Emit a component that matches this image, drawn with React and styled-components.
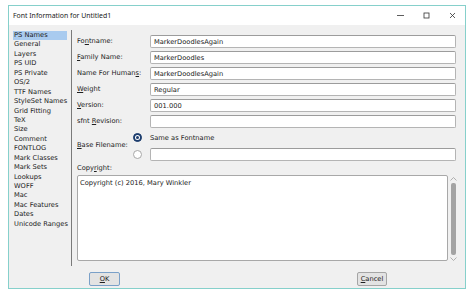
import React from "react";
import styled, { createGlobalStyle } from "styled-components";

const Global = createGlobalStyle`
  html, body { margin: 0; padding: 0; background: #ffffff; }
  body { font-family: "DejaVu Sans", "Liberation Sans", sans-serif; }
  * { box-sizing: border-box; }
`;

const Window = styled.div`
  margin: 5px 0 0 8px;
  width: 458px;
  height: 284px;
  border: 1px solid #86d0cb;
  display: flex;
  flex-direction: column;
  background: #f0f0f0;
`;

const TitleBar = styled.div`
  height: 19px;
  flex: none;
  background: #ffffff;
  display: flex;
  align-items: center;
  padding-left: 4px;
  font-family: "Noto Sans", "Open Sans", sans-serif;
  font-size: 6.9px;
  color: #1a1a1a;
`;

const Title = styled.div`
  flex: 1;
`;

const Controls = styled.div`
  display: flex;
  align-items: center;
  height: 100%;
`;

const ControlBtn = styled.div`
  width: 26px;
  height: 100%;
  display: flex;
  align-items: center;
  justify-content: center;
`;

const Top = styled.div`
  display: flex;
  height: 241px;
  flex: none;
`;

const Sidebar = styled.ul`
  list-style: none;
  margin: 0;
  padding: 6px 0 0 4px;
  width: 62px;
  flex: none;
`;

const Item = styled.li`
  width: 54px;
  height: 9.45px;
  line-height: 9.45px;
  font-size: 6.7px;
  color: #202020;
  white-space: nowrap;
  padding-left: 1px;
  background: ${(p) => (p.$selected ? "#a9cbef" : "transparent")};
`;

const Divider = styled.div`
  width: 1px;
  margin-top: 5px;
  background: #7a7a7a;
  flex: none;
`;

const Main = styled.div`
  flex: 1;
  padding: 10px 8px 0 5px;
  display: flex;
  flex-direction: column;
`;

const Form = styled.div`
  display: grid;
  grid-template-columns: 73px 306px;
  grid-auto-rows: 13px;
  row-gap: 3px;
`;

const Label = styled.div`
  font-size: 6.7px;
  line-height: 13px;
  color: #202020;
  white-space: nowrap;
  ${(p) => (p.$span ? `grid-row: span ${p.$span}; align-self: center;` : "")}
`;

const U = styled.span`
  text-decoration: underline;
  text-underline-offset: 1px;
`;

const Input = styled.div`
  height: 13px;
  background: #ffffff;
  border: 1px solid #b4b4b4;
  border-top-color: #9c9c9c;
  border-radius: 2px;
  font-size: 6.7px;
  color: #202020;
  padding-left: 3px;
  display: flex;
  align-items: center;
`;

const RadioRow = styled.div`
  display: flex;
  align-items: center;
  margin-left: -17px;
  gap: 8px;
  font-size: 6.7px;
  color: #202020;
  ${(p) => (p.$shift ? `margin-top: ${p.$shift}px;` : "")}
`;

const Radio = styled.div`
  width: 9px;
  height: 9px;
  flex: none;
  border-radius: 50%;
  background: ${(p) => (p.$on ? "#1d3d6e" : "#ffffff")};
  border: 1px solid ${(p) => (p.$on ? "#1d3d6e" : "#a8a8a8")};
  display: flex;
  align-items: center;
  justify-content: center;
  &::after {
    content: "";
    display: ${(p) => (p.$on ? "block" : "none")};
    width: 3px;
    height: 3px;
    border-radius: 50%;
    background: #1d3d6e;
    box-shadow: 0 0 0 1px #ffffff;
  }
`;

const RadioInput = styled(Input)`
  flex: 1;
`;

const CopyLabel = styled(Label)`
  margin-top: 4px;
  height: 9px;
  line-height: 9px;
`;

const AreaRow = styled.div`
  display: flex;
  margin-top: 2px;
  height: 86px;
`;

const TextArea = styled.div`
  width: 371px;
  height: 86px;
  background: #ffffff;
  border: 1px solid #a8a8a8;
  border-radius: 2px;
  padding: 3px 2px;
  font-size: 6.7px;
  color: #202020;
`;

const ScrollBar = styled.div`
  width: 10px;
  display: flex;
  flex-direction: column;
  align-items: center;
  padding-top: 2px;
`;

const Thumb = styled.div`
  width: 5px;
  flex: 1;
  margin: 2px 0;
  background: #a3a3a3;
  border-radius: 2px;
`;

const Footer = styled.div`
  flex: 1;
  display: flex;
  justify-content: space-between;
  align-items: flex-start;
  padding: 6px 78px 0 80px;
`;

const Button = styled.div`
  width: ${(p) => p.$w}px;
  height: 14px;
  background: #e3e3e3;
  border: 1px solid ${(p) => (p.$default ? "#7aa0c8" : "#a5a5a5")};
  border-radius: 2px;
  display: flex;
  align-items: center;
  justify-content: center;
  font-size: 6.7px;
  color: #202020;
`;

const Arrow = ({ up }) => (
  <svg width="7" height="4" viewBox="0 0 7 4">
    <path
      d={up ? "M0.5 3.5 L3.5 0.5 L6.5 3.5" : "M0.5 0.5 L3.5 3.5 L6.5 0.5"}
      fill="none"
      stroke="#a0a0a0"
      strokeWidth="0.8"
    />
  </svg>
);

const items = [
  "PS Names", "General", "Layers", "PS UID", "PS Private", "OS/2",
  "TTF Names", "StyleSet Names", "Grid Fitting", "TeX", "Size", "Comment",
  "FONTLOG", "Mark Classes", "Mark Sets", "Lookups", "WOFF", "Mac",
  "Mac Features", "Dates", "Unicode Ranges",
];

export default function App() {
  return (
    <>
      <Global />
      <Window>
        <TitleBar>
          <Title>Font Information for Untitled1</Title>
          <Controls>
            <ControlBtn>
              <svg width="7" height="7" viewBox="0 0 7 7">
                <path d="M0 3.5 H7" stroke="#333" strokeWidth="0.8" />
              </svg>
            </ControlBtn>
            <ControlBtn>
              <svg width="7" height="7" viewBox="0 0 7 7">
                <rect x="1" y="1" width="5" height="5" fill="none" stroke="#333" strokeWidth="0.8" />
              </svg>
            </ControlBtn>
            <ControlBtn>
              <svg width="7" height="7" viewBox="0 0 7 7">
                <path d="M1 1 L6 6 M6 1 L1 6" stroke="#333" strokeWidth="0.8" />
              </svg>
            </ControlBtn>
          </Controls>
        </TitleBar>
        <Top>
          <Sidebar>
            {items.map((it, i) => (
              <Item key={it} $selected={i === 0}>{it}</Item>
            ))}
          </Sidebar>
          <Divider />
          <Main>
            <Form>
              <Label>Fo<U>n</U>tname:</Label>
              <Input>MarkerDoodlesAgain</Input>
              <Label><U>F</U>amily Name:</Label>
              <Input>MarkerDoodles</Input>
              <Label>Name For Human<U>s</U>:</Label>
              <Input>MarkerDoodlesAgain</Input>
              <Label><U>W</U>eight</Label>
              <Input>Regular</Input>
              <Label><U>V</U>ersion:</Label>
              <Input>001.000</Input>
              <Label>sfnt <U>R</U>evision:</Label>
              <Input />
              <Label $span={2}><U>B</U>ase Filename:</Label>
              <RadioRow>
                <Radio $on />
                <span>Same as Fontname</span>
              </RadioRow>
              <RadioRow $shift={1}>
                <Radio />
                <RadioInput />
              </RadioRow>
            </Form>
            <CopyLabel>Copy<U>r</U>ight:</CopyLabel>
            <AreaRow>
              <TextArea>Copyright (c) 2016, Mary Winkler</TextArea>
              <ScrollBar>
                <Arrow up />
                <Thumb />
                <Arrow />
              </ScrollBar>
            </AreaRow>
          </Main>
        </Top>
        <Footer>
          <Button $w={31} $default><U>O</U>K</Button>
          <Button $w={30}><U>C</U>ancel</Button>
        </Footer>
      </Window>
    </>
  );
}
